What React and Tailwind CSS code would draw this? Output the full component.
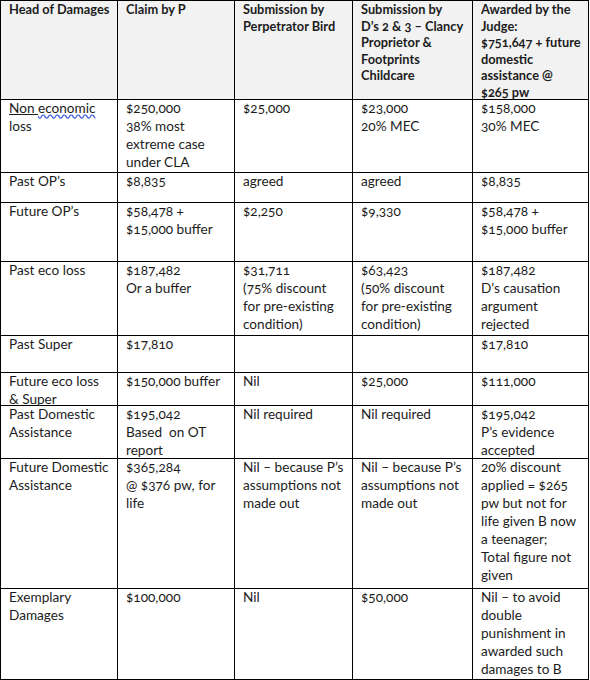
const header = [
  ["Head of Damages"],
  ["Claim by P"],
  ["Submission by", "Perpetrator Bird"],
  ["Submission by", "D’s 2 & 3 – Clancy", "Proprietor &", "Footprints", "Childcare"],
  ["Awarded by the", "Judge:", "$751,647 + future", "domestic", "assistance @", "$265 pw"],
];

const rows = [
  [
    null,
    ["$250,000", "38% most", "extreme case", "under CLA"],
    ["$25,000"],
    ["$23,000", "20% MEC"],
    ["$158,000", "30% MEC"],
  ],
  [["Past OP’s"], ["$8,835"], ["agreed"], ["agreed"], ["$8,835"]],
  [
    ["Future OP’s"],
    ["$58,478 +", "$15,000 buffer"],
    ["$2,250"],
    ["$9,330"],
    ["$58,478 +", "$15,000 buffer"],
  ],
  [
    ["Past eco loss"],
    ["$187,482", "Or a buffer"],
    ["$31,711", "(75% discount", "for pre-existing", "condition)"],
    ["$63,423", "(50% discount", "for pre-existing", "condition)"],
    ["$187,482", "D’s causation", "argument", "rejected"],
  ],
  [["Past Super"], ["$17,810"], [], [], ["$17,810"]],
  [["Future eco loss", "& Super"], ["$150,000 buffer"], ["Nil"], ["$25,000"], ["$111,000"]],
  [
    ["Past Domestic", "Assistance"],
    ["$195,042", "Based  on OT", "report"],
    ["Nil required"],
    ["Nil required"],
    ["$195,042", "P’s evidence", "accepted"],
  ],
  [
    ["Future Domestic", "Assistance"],
    ["$365,284", "@ $376 pw, for", "life"],
    ["Nil – because P’s", "assumptions not", "made out"],
    ["Nil – because P’s", "assumptions not", "made out"],
    ["20% discount", "applied = $265", "pw but not for", "life given B now", "a teenager;", "Total figure not", "given"],
  ],
  [
    ["Exemplary", "Damages"],
    ["$100,000"],
    ["Nil"],
    ["$50,000"],
    ["Nil – to avoid", "double", "punishment in", "awarded such", "damages to B"],
  ],
];

const Lines = ({ lines }) => lines.map((l, i) => <div key={i} className="whitespace-pre">{l}</div>);

export default function App() {
  return (
    <div className="bg-white w-[590px] h-[680px] font-['Lato','Open_Sans',sans-serif] text-[#1c1c1c] oldstyle-nums">
      <div className="grid w-[589px] grid-cols-[116px_116px_117px_119px_115px] grid-rows-[98px_72px_29px_58px_73px_36px_32px_52px_129px_90px] gap-px border border-black bg-black">
        {header.map((cell, i) => (
          <div key={i} className="overflow-hidden bg-[#f2f2f2] pl-2 text-[12.8px] font-bold leading-[16.5px]">
            <Lines lines={cell} />
          </div>
        ))}
        {rows.map((row, r) =>
          row.map((cell, c) => (
            <div key={`${r}-${c}`} className="bg-white pl-2 text-[13.6px] leading-[18px]">
              <div className="-mt-px">
                {cell ? (
                  <Lines lines={cell} />
                ) : (
                  <>
                    <div>
                      <span className="underline">Non </span>
                      <span className="underline decoration-wavy decoration-[#3b5bdb]">economic</span>
                    </div>
                    <div>loss</div>
                  </>
                )}
              </div>
            </div>
          ))
        )}
      </div>
    </div>
  );
}
